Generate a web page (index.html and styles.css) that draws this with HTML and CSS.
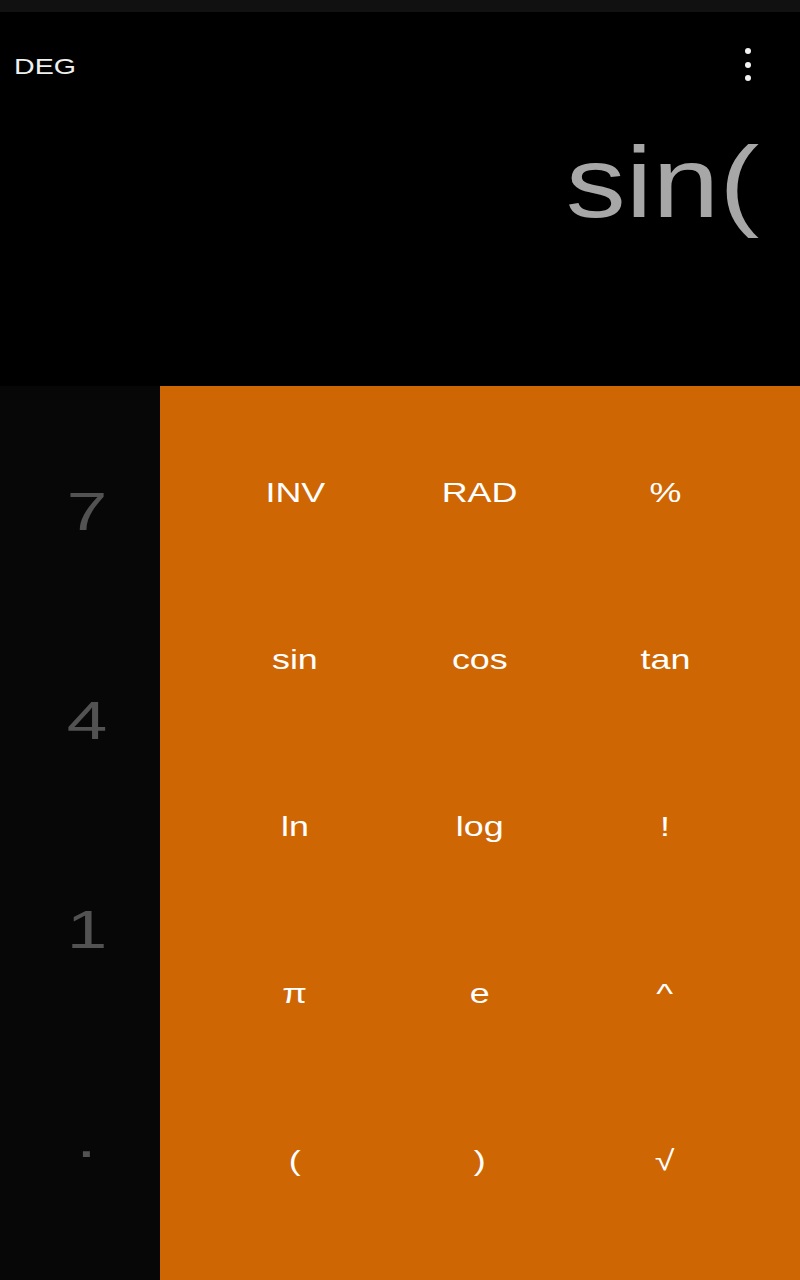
FILE: index.html
```html
<!DOCTYPE html>
<html lang="en">
<head>
<meta charset="utf-8">
<title>Calculator</title>
<link rel="stylesheet" href="styles.css">
</head>
<body>
<div class="screen">
  <div class="status-bar"></div>
  <header class="header">
    <div class="toolbar">
      <span class="mode">DEG</span>
      <div class="menu" aria-label="More options">
        <span class="dot"></span>
        <span class="dot"></span>
        <span class="dot"></span>
      </div>
    </div>
    <div class="display">
      <span class="formula">sin(</span>
    </div>
  </header>
  <main class="keypad">
    <div class="digits">
      <div class="key digit"><span>7</span></div>
      <div class="key digit"><span>4</span></div>
      <div class="key digit"><span>1</span></div>
      <div class="key digit"><span>.</span></div>
    </div>
    <div class="advanced">
      <div class="key fn"><span>INV</span></div>
      <div class="key fn"><span>RAD</span></div>
      <div class="key fn"><span>%</span></div>
      <div class="key fn"><span>sin</span></div>
      <div class="key fn"><span>cos</span></div>
      <div class="key fn"><span>tan</span></div>
      <div class="key fn"><span>ln</span></div>
      <div class="key fn"><span>log</span></div>
      <div class="key fn"><span>!</span></div>
      <div class="key fn"><span>π</span></div>
      <div class="key fn"><span>e</span></div>
      <div class="key fn"><span>^</span></div>
      <div class="key fn"><span>(</span></div>
      <div class="key fn"><span>)</span></div>
      <div class="key fn"><span>√</span></div>
    </div>
  </main>
</div>
</body>
</html>
```

FILE: styles.css
```css
html, body {
  margin: 0;
  padding: 0;
  background: #000;
}

body {
  font-family: "Liberation Sans", Arial, sans-serif;
  width: 800px;
  height: 1280px;
  overflow: hidden;
}

.screen {
  display: flex;
  flex-direction: column;
  width: 800px;
  height: 1280px;
}

.status-bar {
  height: 12px;
  background: #111111;
  flex: none;
}

.header {
  height: 374px;
  flex: none;
  background: #000;
  display: flex;
  flex-direction: column;
}

.toolbar {
  height: 106px;
  display: flex;
  align-items: center;
  justify-content: space-between;
  padding: 0 49px 0 14px;
}

.mode {
  color: #f0f0f0;
  font-size: 22px;
  display: inline-block;
  margin-top: 4px;
  transform: scaleX(1.3);
  transform-origin: left center;
}

.menu {
  display: flex;
  flex-direction: column;
  gap: 7.5px;
  margin-top: -1px;
}

.dot {
  width: 6px;
  height: 6px;
  border-radius: 50%;
  background: #f2f2f2;
}

.display {
  display: flex;
  justify-content: flex-end;
  padding: 14px 41px 0 0;
}

.formula {
  font-size: 100px;
  line-height: 100px;
  color: #a7a7a7;
  display: inline-block;
  transform: scaleX(1.2);
  transform-origin: right center;
}

.keypad {
  flex: 1;
  display: flex;
}

.digits {
  width: 160px;
  flex: none;
  background: #070707;
  box-sizing: border-box;
  padding: 20px 0 0 14px;
  display: grid;
  grid-template-rows: repeat(4, 209px);
  align-content: start;
}

.advanced {
  flex: 1;
  background: #cf6604;
  box-sizing: border-box;
  padding: 23px 42.5px 0;
  display: grid;
  grid-template-columns: repeat(3, 1fr);
  grid-template-rows: repeat(5, 167px);
  align-content: start;
}

.key {
  display: flex;
  align-items: center;
  justify-content: center;
}

.key span {
  display: inline-block;
}

.digit span {
  font-size: 54px;
  color: #525252;
  transform: scaleX(1.35);
}

.fn span {
  font-size: 28px;
  color: #ffffff;
  transform: scaleX(1.28);
}
```
